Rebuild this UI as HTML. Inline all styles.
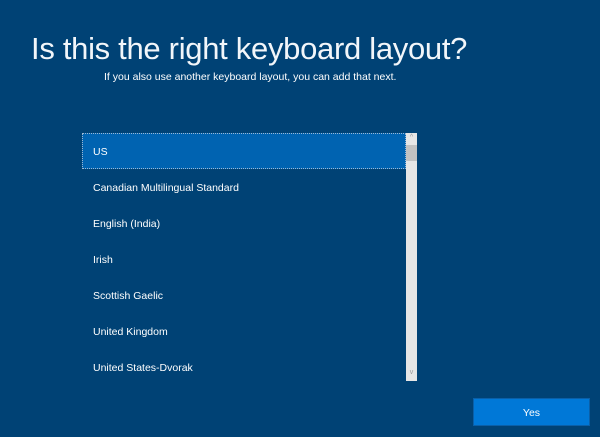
<!DOCTYPE html>
<html><head><style>
body{margin:0;width:600px;height:437px;background:#004275;font-family:"Liberation Sans",sans-serif;color:#fff;position:relative;overflow:hidden}
h1{position:absolute;left:31px;top:31px;margin:0;font-weight:normal;font-size:31px;letter-spacing:-0.3px;white-space:nowrap;color:#f2f6fa}
.sub{position:absolute;left:104px;top:71px;font-size:10.5px;white-space:nowrap}
.list{position:absolute;left:82px;top:133px;width:324px;height:248px}
.row{height:36px;line-height:38px;padding-left:11px;font-size:10.5px;box-sizing:border-box}
.sel{background:#0063b1;border:1px dotted #9bb8d4;line-height:36px;padding-left:10px}
.sb{position:absolute;left:406px;top:133px;width:11px;height:248px;background:#e6e6e6}
.thumb{position:absolute;left:0;top:12px;width:11px;height:16px;background:#c2c2c2}
.ar{position:absolute;left:0;width:11px;text-align:center;font-size:7px;color:#999}
.btn{position:absolute;left:473px;top:398px;width:117px;height:28px;background:#0078d7;border:1px solid #0a5fa8;box-sizing:border-box;text-align:center;line-height:28px;font-size:10.5px}
</style></head><body>
<h1>Is this the right keyboard layout?</h1>
<div class="sub">If you also use another keyboard layout, you can add that next.</div>
<div class="list">
<div class="row sel">US</div>
<div class="row">Canadian Multilingual Standard</div>
<div class="row">English (India)</div>
<div class="row">Irish</div>
<div class="row">Scottish Gaelic</div>
<div class="row">United Kingdom</div>
<div class="row">United States-Dvorak</div>
</div>
<div class="sb"><div class="ar" style="top:1px">^</div><div class="thumb"></div><div class="ar" style="top:236px">v</div></div>
<div class="btn">Yes</div>
</body></html>
